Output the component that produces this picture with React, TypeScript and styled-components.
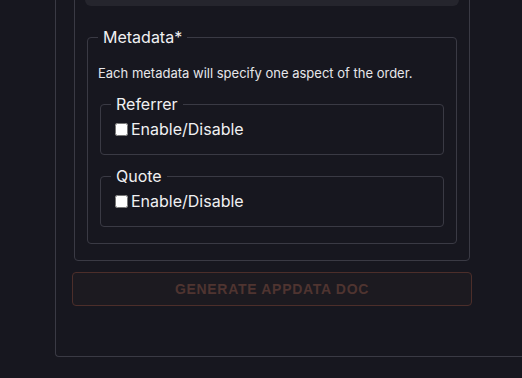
import React from "react";
import styled, { createGlobalStyle } from "styled-components";

const Global = createGlobalStyle`
  html, body { margin: 0; padding: 0; background: #17171f; overflow: hidden; }
  body { font-family: Inter, "Noto Sans", sans-serif; color: #ececec; }
  * { box-sizing: border-box; }
`;

const Page = styled.div`
  height: 378px;
  overflow: hidden;
`;

const OuterFrame = styled.div`
  margin-top: -46px;
  margin-left: 55px;
  width: 600px;
  border: 1px solid #3a3a44;
  border-right: none;
  border-radius: 0 0 0 4px;
  padding: 20px 0 50px 16px;
`;

const Column = styled.div`
  width: 400px;
  display: flex;
  flex-direction: column;
  gap: 11px;
`;

const FormFrame = styled.div`
  margin: 0 2px;
  border: 1px solid #3a3a44;
  border-radius: 4px;
  padding: 10px 10px 16px;
`;

const TopBar = styled.div`
  height: 20px;
  background: #25252d;
  border-radius: 0 0 6px 6px;
`;

const Group = styled.fieldset<{ $top: number; $pad: string }>`
  margin: ${(p) => p.$top}px 2px 0;
  border: 1px solid #3a3a44;
  border-radius: 4px;
  padding: ${(p) => p.$pad};
  min-width: 0;
`;

const Legend = styled.legend`
  font-size: 16px;
  line-height: 19px;
  padding: 0 5px;
  color: #f0f0f2;
`;

const Description = styled.p`
  margin: 18px 0 14px;
  font-size: 13px;
  line-height: 16px;
  color: #e6e6ea;
`;

const CheckRow = styled.label`
  display: flex;
  align-items: center;
  font-size: 16px;
  line-height: 19px;
  color: #f0f0f2;
`;

const Check = styled.input`
  width: 13px;
  height: 13px;
  margin: 3px 3px 3px 4px;
`;

const GenerateButton = styled.button`
  height: 34px;
  width: 400px;
  border: 1px solid #4c2e2a;
  border-radius: 4px;
  background: #1c1a20;
  color: #4f3430;
  font-family: "Liberation Sans", Arial, sans-serif;
  font-weight: 700;
  font-size: 14px;
  letter-spacing: 0.7px;
  text-transform: uppercase;
  padding: 0;
`;

const fields = ["Referrer", "Quote"];

export default function App() {
  return (
    <>
      <Global />
      <Page>
        <OuterFrame>
          <Column>
            <FormFrame>
              <TopBar />
              <Group $top={22} $pad="0 10px 16px">
                <Legend>Metadata*</Legend>
                <Description>Each metadata will specify one aspect of the order.</Description>
                {fields.map((f, i) => (
                  <Group key={f} $top={i === 0 ? 0 : 12} $pad="6px 10px 15px">
                    <Legend>{f}</Legend>
                    <CheckRow>
                      <Check type="checkbox" />
                      Enable/Disable
                    </CheckRow>
                  </Group>
                ))}
              </Group>
            </FormFrame>
            <GenerateButton disabled>Generate AppData Doc</GenerateButton>
          </Column>
        </OuterFrame>
      </Page>
    </>
  );
}
